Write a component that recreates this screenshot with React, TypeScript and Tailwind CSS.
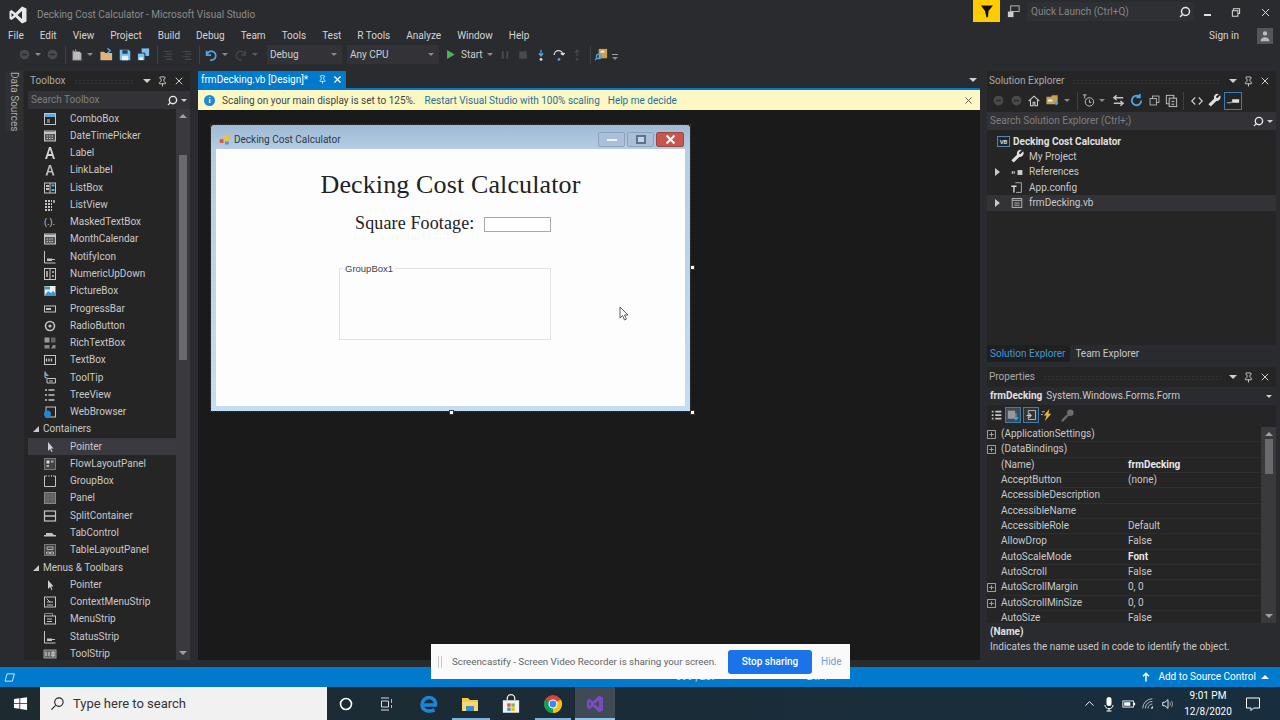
import React from "react";
import { ChevronUp, Pin, Search, X } from "lucide-react";

const toolboxA = [
  ["ComboBox", "combo"],
  ["DateTimePicker", "cal"],
  ["Label", "a"],
  ["LinkLabel", "a2"],
  ["ListBox", "list"],
  ["ListView", "dots"],
  ["MaskedTextBox", "mask"],
  ["MonthCalendar", "cal"],
  ["NotifyIcon", "strip"],
  ["NumericUpDown", "num"],
  ["PictureBox", "pic"],
  ["ProgressBar", "prog"],
  ["RadioButton", "radio"],
  ["RichTextBox", "rich"],
  ["TextBox", "text"],
  ["ToolTip", "tip"],
  ["TreeView", "tree"],
  ["WebBrowser", "web"],
];
const toolboxB = [
  ["Pointer", "ptr"],
  ["FlowLayoutPanel", "flow"],
  ["GroupBox", "group"],
  ["Panel", "panel"],
  ["SplitContainer", "split"],
  ["TabControl", "tab"],
  ["TableLayoutPanel", "table"],
];
const toolboxC = [
  ["Pointer", "ptr"],
  ["ContextMenuStrip", "ctx"],
  ["MenuStrip", "menu"],
  ["StatusStrip", "strip"],
  ["ToolStrip", "tool"],
];

const props: [string, string, boolean?, boolean?][] = [
  ["(ApplicationSettings)", "", false, true],
  ["(DataBindings)", "", false, true],
  ["(Name)", "frmDecking", true],
  ["AcceptButton", "(none)"],
  ["AccessibleDescription", ""],
  ["AccessibleName", ""],
  ["AccessibleRole", "Default"],
  ["AllowDrop", "False"],
  ["AutoScaleMode", "Font", true],
  ["AutoScroll", "False"],
  ["AutoScrollMargin", "0, 0", false, true],
  ["AutoScrollMinSize", "0, 0", false, true],
  ["AutoSize", "False"],
];

const menus = ["File", "Edit", "View", "Project", "Build", "Debug", "Team", "Tools", "Test", "R Tools", "Analyze", "Window", "Help"];

const Svg = ({ children, size = 16, vb = 16, className = "" }: { children: React.ReactNode; size?: number; vb?: number; className?: string }) => (
  <svg width={size} height={size} viewBox={`0 0 ${vb} ${vb}`} className={`shrink-0 ${className}`} fill="none">
    {children}
  </svg>
);

const ToolIcon = ({ kind }: { kind: string }) => {
  const c = "#c4c4c4";
  switch (kind) {
    case "combo":
      return <Svg><rect x="2.5" y="2.5" width="11" height="11" stroke={c} /><rect x="3" y="3" width="10" height="3" fill="#5ea9d6" /><path d="M5 9h3M5 11h3" stroke={c} /></Svg>;
    case "cal":
      return <Svg><rect x="2.5" y="3" width="11" height="10" fill="#555" stroke={c} /><path d="M3 5h10" stroke={c} strokeWidth="2" /><path d="M4.5 8h7M4.5 10.500h7" stroke={c} strokeDasharray="1.500 1" /></Svg>;
    case "a":
      return <Svg><path d="M3 14 7 2h2l4 12h-2l-1-3H6l-1 3Zm3.600-5h2.800L8 4.500Z" fill="#d4d4d4" /></Svg>;
    case "a2":
      return <Svg><path d="M3.500 13.500 7 3h2l3.500 10.500h-2l-.8-3H6.300l-.8 3Zm3.200-4.600h2.600L8 5Z" fill="#bdbdbd" /></Svg>;
    case "list":
      return <Svg><rect x="2.500" y="3" width="11" height="10" stroke={c} /><path d="M8 3v10" stroke={c} /><path d="M4 6h3M4 9h3" stroke={c} strokeWidth="2" /><path d="M9.500 5.500h3M9.500 10h3" stroke="#5ea9d6" strokeWidth="2" /></Svg>;
    case "dots":
      return <Svg><path d="M3 4h7M3 7h7M3 10h7M3 13h7" stroke={c} strokeWidth="2" strokeDasharray="2 1" /><path d="M12 3v3" stroke={c} strokeWidth="1.500" /></Svg>;
    case "mask":
      return <Svg><text x="2" y="11" fontSize="9" fill={c} fontFamily="Liberation Sans, sans-serif">(.).</text></Svg>;
    case "strip":
      return <Svg><path d="M2.500 2v12h11" stroke={c} /><rect x="5" y="9.500" width="5" height="2.500" fill={c} /><path d="M10 10.500h3" stroke={c} /></Svg>;
    case "num":
      return <Svg><rect x="2.500" y="2.500" width="11" height="11" stroke={c} /><path d="M8 3v10" stroke={c} /><path d="M5 5v6M10 6h2M10 10h2" stroke={c} strokeWidth="1.500" /></Svg>;
    case "pic":
      return <Svg><rect x="2.500" y="3" width="11" height="10" fill="#eee" /><path d="m3 12 3-4 3 2 2-2 2 2v3H3Z" fill="#2f9ad8" /><rect x="3" y="3.500" width="5" height="3" fill="#2f9ad8" /></Svg>;
    case "prog":
      return <Svg><rect x="2.500" y="5" width="11" height="6" stroke={c} /><rect x="4" y="7" width="5" height="2" fill={c} /></Svg>;
    case "radio":
      return <Svg><circle cx="8" cy="8" r="4.500" stroke={c} strokeWidth="1.600" /><circle cx="8" cy="8" r="1.600" fill={c} /></Svg>;
    case "rich":
      return <Svg><rect x="2.500" y="2.500" width="5" height="5" fill="#999" /><rect x="9" y="2.500" width="4.500" height="5" fill="#666" /><path d="M2.500 10h5v3.500h-5ZM9 13.500 11 10h2.500v3.500Z" fill="#888" /></Svg>;
    case "text":
      return <Svg><rect x="2.500" y="3.500" width="11" height="9" stroke={c} /><path d="M4.500 6.500v3M7 6.500v3M9.500 6.500v3" stroke={c} strokeWidth="1.400" /></Svg>;
    case "tip":
      return <Svg><path d="M3 1.500v6l3 1h7.500v4.500H5V9" stroke={c} /><path d="M3 1.500 7 6H3Z" fill="#5ea9d6" /><path d="M7 11h4" stroke={c} /></Svg>;
    case "tree":
      return <Svg><path d="M3 3h2M6.500 3h6M3 8h2M6.500 8h6M3 13h2M6.500 13h6" stroke={c} strokeWidth="1.500" /></Svg>;
    case "web":
      return <Svg><rect x="4" y="3" width="9.500" height="10" stroke={c} /><circle cx="5.500" cy="10" r="3.500" fill="#1f8ad0" /></Svg>;
    case "ptr":
      return <Svg><path d="M6 3v9l2-2 1.500 3 1-.6L9 9.500h2.500Z" fill="#d0d0d0" /></Svg>;
    case "flow":
      return <Svg><rect x="2.500" y="2.500" width="11" height="11" fill="#444" stroke="#777" /><path d="M4.500 4.500h3v3h-3Z" fill="#ddd" /><path d="M9 4.500h2.500v2H9ZM4.500 9h2.500v2H4.500Z" fill="#aaa" /></Svg>;
    case "group":
      return <Svg><path d="M5 3H2.500v10.500h11V3H11" stroke={c} /><path d="M6.500 3h1M9 3h1" stroke={c} strokeWidth="1.500" /></Svg>;
    case "panel":
      return <Svg><rect x="2.500" y="2.500" width="11" height="11" fill="#5d5d5d" stroke="#888" /><path d="M2.500 6h11M2.500 9h11M6 2.500v11M10 2.500v11" stroke="#777" strokeWidth=".6" /></Svg>;
    case "split":
      return <Svg><rect x="2.500" y="3" width="11" height="10" stroke={c} strokeWidth="1.200" /><path d="M2.500 8h11" stroke={c} strokeWidth="1.500" /></Svg>;
    case "tab":
      return <Svg><path d="M2 10h2V8h6l2 2h2v1.500H2Z" fill={c} /></Svg>;
    case "table":
      return <Svg><rect x="2.500" y="2.500" width="11" height="11" fill="#444" stroke="#777" /><path d="M5 5h6v2.500H5ZM4.500 10h3v2h-3ZM8.500 10h3v2h-3Z" stroke={c} strokeWidth=".8" /></Svg>;
    case "ctx":
      return <Svg><rect x="2.500" y="3" width="11" height="10" stroke={c} /><path d="M4.500 4.500 8 8M5 8h6M5 11h6" stroke={c} /></Svg>;
    case "menu":
      return <Svg><path d="M2.500 5V2.500h8V5" stroke="#888" /><rect x="2.500" y="5" width="11" height="8" stroke={c} /><path d="M5 8h5M5 10.500h5" stroke={c} /></Svg>;
    default:
      return <Svg><rect x="2" y="4" width="12" height="8" fill="#666" stroke="#999" /><path d="M4 6v4M7 6v4M10 6h2v4h-2Z" stroke="#ddd" /></Svg>;
  }
};

const ToolRow = ({ label, kind, active }: { label: string; kind: string; active?: boolean }) => (
  <div className={`flex h-[17.27px] items-center ${active ? "bg-[#3a3a40]" : ""}`}>
    <div className="ml-[8px] flex w-[28px] shrink-0 justify-center">
      <ToolIcon kind={kind} />
    </div>
    <span className="ml-[6px]">{label}</span>
  </div>
);

const Group = ({ label }: { label: string }) => (
  <div className="flex h-[17.27px] items-center">
    <span className="ml-[5px] h-0 w-0 border-b-[6px] border-l-[6px] border-b-[#c8c8c8] border-l-transparent" />
    <span className="ml-[4px]">{label}</span>
  </div>
);

const PanelHead = ({ title }: { title: string }) => (
  <div className="flex h-[20px] shrink-0 items-center text-[#a9a9a9]">
    <span className="ml-[2px]">{title}</span>
    <div className="ml-2 h-[5px] flex-1 bg-[radial-gradient(#343438_1px,transparent_1px)] bg-[length:4px_3px]" />
    <span className="ml-2 h-0 w-0 border-x-[4px] border-t-[4px] border-x-transparent border-t-[#d0d0d0]" />
    <Pin size={11} strokeWidth={2} className="ml-[6px] text-[#d0d0d0]" />
    <X size={12} strokeWidth={2} className="mx-[5px] text-[#d0d0d0]" />
  </div>
);

const Caret = ({ className = "" }: { className?: string }) => (
  <span className={`inline-block h-0 w-0 shrink-0 border-x-[3px] border-t-[3px] border-x-transparent border-t-[#8a8a8a] ${className}`} />
);

const Circle = () => (
  <Svg size={13}>
    <circle cx="8" cy="8" r="6" fill="#4a4a4d" />
    <path d="M5 8h6" stroke="#2a2b2e" strokeWidth="2" />
  </Svg>
);

const MainToolbar = () => (
  <div className="flex h-[21px] shrink-0 items-center">
    <div className="ml-[18px] flex w-[13px] justify-center"><Circle /></div>
    <Caret className="ml-[4px]" />
    <div className="ml-[5px] flex w-[13px] justify-center"><Circle /></div>
    <div className="ml-[6px] h-[18px] w-px bg-[#3f3f46]" />
    <Svg size={14} className="ml-[4px]"><path d="M3 4h8l2 2v8H3Z" fill="#bbb" stroke="#666" /><path d="M6 1.500 7 4l-1 2M3 3l2 1" stroke="#e2b64d" /></Svg>
    <Caret className="ml-[3px]" />
    <Svg size={15} className="ml-[6px]"><path d="M1.500 5h4l1 1.500h7.500V14H1.500Z" fill="#dcb67a" /><path d="M9 1.500 12 4l-3 2.500" stroke="#4fa3e0" strokeWidth="1.500" /></Svg>
    <Svg size={14} className="ml-[4px]"><path d="M2 2h10l2 2v10H2Z" fill="#7cc0f0" /><rect x="5" y="2.500" width="6" height="4" fill="#24425c" /><rect x="4.500" y="9" width="7" height="5" fill="#e4f1fb" /></Svg>
    <Svg size={15} className="ml-[4px]"><path d="M6 1.500h8v8H6Z" fill="#7cc0f0" /><path d="M1.500 6.500h8v8h-8Z" fill="#7cc0f0" stroke="#2a2b2e" /><rect x="3.500" y="11" width="4" height="3" fill="#e4f1fb" /></Svg>
    <div className="ml-[6px] h-[18px] w-px bg-[#3f3f46]" />
    <Svg size={14} className="ml-[3px]"><path d="M3 4h9M6 7h7M3 10h9M6 13h7" stroke="#47474a" strokeWidth="1.300" /></Svg>
    <Svg size={14} className="ml-[5px]"><path d="M3 4h9M6 7h7M3 10h9M6 13h7" stroke="#47474a" strokeWidth="1.300" /></Svg>
    <div className="ml-[5px] h-[18px] w-px bg-[#3f3f46]" />
    <Svg size={14} className="ml-[4px]"><path d="M3 3v5h5M3.500 8A5 5 0 1 1 7 13.500" stroke="#4fa3e0" strokeWidth="2" /></Svg>
    <Caret className="ml-[4px]" />
    <Svg size={14} className="ml-[6px]"><path d="M13 3v5H8M12.500 8A5 5 0 1 0 9 13.500" stroke="#47474a" strokeWidth="1.500" /></Svg>
    <Caret className="ml-[4px] opacity-50" />
    <div className="ml-[9px] flex h-[19px] w-[75px] items-center justify-between bg-[#333337] pl-[3px] pr-[5px] text-[#d0d0d0]">
      Debug<Caret />
    </div>
    <div className="ml-[5px] flex h-[19px] w-[92px] items-center justify-between bg-[#333337] pl-[3px] pr-[5px] text-[#d0d0d0]">
      Any CPU<Caret />
    </div>
    <Svg size={11} className="ml-[6px]"><path d="M3 1.500 14 8 3 14.500Z" fill="#4fb35a" /></Svg>
    <span className="ml-[5px] text-[#d0d0d0]">Start</span>
    <Caret className="ml-[4px]" />
    <Svg size={12} className="ml-[6px]"><path d="M5 3v10M11 3v10" stroke="#4a4a4d" strokeWidth="2.500" /></Svg>
    <Svg size={12} className="ml-[6px]"><rect x="3" y="3" width="10" height="10" fill="#4a4a4d" /></Svg>
    <Svg size={14} className="ml-[5px]"><path d="M8 2v6M5.500 6 8 9l2.500-3" stroke="#4fa3e0" strokeWidth="1.500" /><circle cx="8" cy="13" r="1.600" fill="#ddd" /></Svg>
    <Svg size={14} className="ml-[4px]"><path d="M2.500 8a5 5 0 0 1 10 0M12.500 8l-2.500-2M12.500 8l1.800-2.500" stroke="#ddd" strokeWidth="1.500" /><circle cx="8" cy="13" r="1.600" fill="#4fa3e0" /></Svg>
    <Svg size={14} className="ml-[4px]"><path d="M8 9V3M5.500 5 8 2.500 10.500 5" stroke="#47474a" strokeWidth="1.500" /><circle cx="8" cy="13" r="1.600" fill="#47474a" /></Svg>
    <div className="ml-[6px] h-[18px] w-px bg-[#3f3f46]" />
    <Svg size={15} className="ml-[3px]"><path d="M5 2h9v10H5Z" fill="#c9a050" /><rect x="7" y="4" width="4" height="2" fill="#eee" /><circle cx="5" cy="10" r="2.500" stroke="#4fa3e0" strokeWidth="1.300" /><path d="m3 12-2 2" stroke="#4fa3e0" strokeWidth="1.300" /></Svg>
    <div className="ml-[3px] mt-[4px] flex flex-col items-center gap-[2px]">
      <span className="h-px w-[6px] bg-[#a0a0a0]" />
      <Caret />
    </div>
  </div>
);

const Wrench = ({ className = "" }: { className?: string }) => (
  <Svg size={15} className={className}><path d="M14 2.500 11 5.500l-1-.5-.5-1 3-3a4 4 0 0 0-5 5L1.500 12l2.500 2.500L10 8.500a4 4 0 0 0 4-6Z" fill="#e0e0e0" /></Svg>
);

const SolutionToolbar = () => (
  <div className="flex h-[19px] shrink-0 items-center">
    <div className="ml-[5px] flex w-[13px] justify-center"><Circle /></div>
    <div className="ml-[5px] flex w-[13px] justify-center"><Circle /></div>
    <Svg size={14} className="ml-[4px]"><path d="M2 8 8 2.500 14 8M4 7v6.500h3v-4h2v4h3V7" stroke="#d0d0d0" strokeWidth="1.200" /></Svg>
    <Svg size={15} className="ml-[4px]"><path d="M1.500 4h5l1-1.500h6V12h-12Z" fill="#c9a050" /><rect x="3" y="7" width="5" height="2" fill="#eee" /><path d="M10 11h4M12 9v4" stroke="#4fa3e0" strokeWidth="1.500" /></Svg>
    <Caret className="ml-[4px]" />
    <div className="ml-[7px] h-[18px] w-px bg-[#3f3f46]" />
    <Svg size={15} className="ml-[3px]"><circle cx="9" cy="9.500" r="4.500" stroke="#c4c4c4" /><path d="M9 7v3h2M2 2h4M4 2v4" stroke="#c4c4c4" /></Svg>
    <Caret className="ml-[3px]" />
    <Svg size={15} className="ml-[6px]"><path d="M4 5h9M6 2.500 3 5l3 2.500M12 11H3M10 8.500l3 2.500-3 2.500" stroke="#c4c4c4" strokeWidth="1.500" /></Svg>
    <Svg size={15} className="ml-[3px]"><path d="M13 8a5 5 0 1 1-2-4M11.500 1v3.500H8" stroke="#4fa3e0" strokeWidth="2" /></Svg>
    <Svg size={13} className="ml-[4px]"><rect x="5.500" y="2.500" width="8" height="8" stroke="#c4c4c4" /><rect x="2.500" y="5.500" width="8" height="8" fill="#2a2b2e" stroke="#c4c4c4" /></Svg>
    <Svg size={15} className="ml-[3px]"><rect x="2.500" y="2.500" width="8" height="9" stroke="#c4c4c4" /><rect x="5.500" y="5.500" width="8" height="9" fill="#2a2b2e" stroke="#c4c4c4" /><path d="M8 9h3M8 12h3" stroke="#c4c4c4" /></Svg>
    <div className="ml-[4px] h-[18px] w-px bg-[#3f3f46]" />
    <Svg size={14} className="ml-[6px]"><path d="M6 4 2 8l4 4M10 4l4 4-4 4" stroke="#d0d0d0" strokeWidth="1.300" /></Svg>
    <Wrench className="ml-[3px]" />
    <div className="ml-[2px] flex h-[18px] w-[18px] items-center justify-center border border-[#3a7db0]">
      <Svg size={14}><path d="M1 10h5V8.500" stroke="#c4c4c4" /><rect x="7" y="6" width="8" height="4" fill="#e0e0e0" /></Svg>
    </div>
  </div>
);

const SearchBox = ({ placeholder, className = "" }: { placeholder: string; className?: string }) => (
  <div className={`flex h-[18px] shrink-0 items-center bg-[#333337] text-[#7f7f7f] ${className}`}>
    <span className="ml-[3px] flex-1 truncate">{placeholder}</span>
    <Search size={11} strokeWidth={3} className="-scale-x-100 text-[#e8e8e8]" />
    <span className="mx-[3px] h-0 w-0 border-x-[3px] border-t-[3px] border-x-transparent border-t-[#d0d0d0]" />
  </div>
);

const TreeRow = ({ label, arrow, bold, selected, icon }: { label: string; arrow?: boolean; bold?: boolean; selected?: boolean; icon: React.ReactNode }) => (
  <div className={`flex h-[15.33px] items-center ${selected ? "bg-[#333337]" : ""}`}>
    {bold ? (
      <>
        <div className="ml-[10px] flex w-[13px] justify-center">{icon}</div>
        <span className="ml-[3px] font-bold text-[#e0e0e0]">{label}</span>
      </>
    ) : (
      <>
        <div className="ml-[6px] flex w-[8px] justify-center">
          {arrow && <span className="h-0 w-0 border-y-[4px] border-l-[5px] border-y-transparent border-l-[#c8c8c8]" />}
        </div>
        <div className="ml-[9px] flex w-[14px] justify-center">{icon}</div>
        <span className="ml-[5px]">{label}</span>
      </>
    )}
  </div>
);

const FormWindow = () => (
  <div className="relative ml-[13px] mt-[15px] w-[479px] outline-1 outline-dotted outline-[#3a3a3a]">
    <div className="flex h-[24px] items-center rounded-t-[3px] bg-gradient-to-b from-[#9fbad5] to-[#b5cde3] pl-[8px] pt-[5px] text-[#2c3a48]">
      <Svg size={12}>
        <rect x="1" y="7" width="5" height="5" fill="#d9523f" />
        <rect x="7" y="2" width="7" height="7" fill="#f1c232" />
        <rect x="8" y="10" width="5" height="4" fill="#5a8fd0" />
      </Svg>
      <span className="ml-[3px]">Decking Cost Calculator</span>
      <div className="ml-auto mr-[6px] flex gap-[2px]">
        <div className="flex h-[15px] w-[27px] items-center justify-center rounded-[2px] border border-[#8ba3bb] bg-[#a9c0d8]"><span className="h-[2px] w-[10px] bg-[#eef3f8]" /></div>
        <div className="flex h-[15px] w-[27px] items-center justify-center rounded-[2px] border border-[#8ba3bb] bg-[#a9c0d8]"><span className="h-[9px] w-[10px] border-2 border-[#5d7388] bg-[#c3d4e5]" /></div>
        <div className="flex h-[15px] w-[28px] items-center justify-center rounded-[2px] border border-[#9a4a44] bg-[#c9564c]"><X size={13} strokeWidth={4} className="text-white" /></div>
      </div>
    </div>
    <div className="bg-gradient-to-b from-[#b5cde3] to-[#c4ddf2] px-[5px] pb-[5px]">
      <div className="h-[257px] bg-[#fdfdfe] pt-[19px] font-['Liberation_Serif',serif] text-[#222]">
        <div className="text-center text-[26px] leading-[34px] tracking-[0.13px]">Decking Cost Calculator</div>
        <div className="mt-[6px] flex h-[30px] items-center pl-[139px]">
          <span className="text-[18px] tracking-[0.13px]">Square Footage:</span>
          <div className="ml-[10px] mt-[2px] h-[15px] w-[67px] border border-[#a8a8a8] bg-white" />
        </div>
        <div className="relative ml-[123px] mt-[30px] h-[72px] w-[212px] border border-[#e2e2e2] font-['Liberation_Sans',sans-serif]">
          <span className="absolute -top-[6px] left-[3px] bg-[#fdfdfe] px-[2px] text-[9.500px] leading-[12px] text-[#444]">GroupBox1</span>
        </div>
      </div>
    </div>
    <svg width="10" height="15" viewBox="0 0 10 15" className="absolute left-[408px] top-[181px]">
      <path d="M1 1v11l2.500-2.500L5.500 14l2-1-2-4H9Z" fill="#fff" stroke="#333" strokeWidth=".8" />
    </svg>
    <span className="absolute -right-[5px] top-[140px] h-[5px] w-[5px] border border-[#333] bg-white" />
    <span className="absolute -right-[5px] -bottom-[4px] h-[5px] w-[5px] border border-[#333] bg-white" />
    <span className="absolute left-[238px] -bottom-[4px] h-[5px] w-[5px] border border-[#333] bg-white" />
  </div>
);

const Tray = () => (
  <div className="ml-auto flex items-center text-white">
    <ChevronUp size={15} strokeWidth={1.5} />
    <Svg size={16} className="ml-[4px]"><rect x="5.500" y="1" width="5" height="9" rx="2.500" fill="#fff" /><path d="M4 9c0 5 8 5 8 0M8 12v3M5.500 15h5" stroke="#fff" /></Svg>
    <Svg size={14} className="ml-[5px]"><rect x="1" y="4.500" width="12" height="7" stroke="#fff" /><rect x="2.500" y="6" width="7" height="4" fill="#fff" /><rect x="13.500" y="6.500" width="1.500" height="3" fill="#fff" /></Svg>
    <Svg size={14} className="ml-[5px]"><path d="M2 13A11 11 0 0 1 13 2M5 13a8 8 0 0 1 8-8M8 13a5 5 0 0 1 5-5" stroke="#ccc" /><path d="m11 13 2.500-3V13Z" fill="#fff" /></Svg>
    <Svg size={14} className="ml-[6px]"><path d="M2 6h2.500L8 3v10l-3.500-3H2Z" stroke="#fff" /><path d="M10 6a3 3 0 0 1 0 4M12 4.500a5.500 5.500 0 0 1 0 7" stroke="#aaa" /></Svg>
    <div className="ml-[5px] w-[56px] text-center text-[10px] leading-[16px]">
      <div>9:01 PM</div>
      <div>12/8/2020</div>
    </div>
    <Svg size={16} className="ml-[9px] mr-[19px]"><path d="M1.500 2h13v10H8.500L6 14.500V12H1.500Z" stroke="#fff" /></Svg>
  </div>
);

const Taskbar = () => (
  <div className="relative flex h-[33px] shrink-0 items-center bg-gradient-to-r from-[#1d2a30] to-[#182e3f]">
    <Svg size={15} className="ml-[13px]"><path d="M1 3.200 6.800 2.400v5.300H1ZM7.700 2.300 15 1.300v6.400H7.700ZM1 8.500h5.800v5.200L1 12.900ZM7.700 8.500H15v6.300l-7.300-1Z" fill="#fff" /></Svg>
    <div className="ml-[12px] flex h-[33px] w-[287px] shrink-0 items-center bg-[#f1f1f1] text-[13px] text-[#333]">
      <Svg size={15} className="ml-[10px]"><circle cx="9.500" cy="6.500" r="4.500" stroke="#222" strokeWidth="1.200" /><path d="M6 10 1.500 14.500" stroke="#222" strokeWidth="1.200" /></Svg>
      <span className="ml-[8px]">Type here to search</span>
    </div>
    <Svg size={16} className="ml-[11px]"><circle cx="8" cy="8" r="5.500" stroke="#fff" strokeWidth="1.600" /></Svg>
    <Svg size={16} className="ml-[24px]"><path d="M3 2h8M3.500 5h7v6h-7ZM3 14h8" stroke="#ddd" /><path d="M13.500 3v4M13.500 9v3" stroke="#bbb" /></Svg>
    <Svg size={20} vb={20} className="ml-[25px]"><path d="M3 11h13.500A6.500 6.500 0 0 0 10 3.500C6 3.500 3 7 3 11c0 5 6 7.500 12.500 5" stroke="#1b86d8" strokeWidth="3.500" /></Svg>
    <Svg size={20} vb={20} className="ml-[21px]"><path d="M2 4h6l2 2h8v11H2Z" fill="#f3c84b" /><path d="M2 8h16v9H2Z" fill="#f7d774" /><rect x="6" y="12" width="8" height="5" fill="#3a8fc4" /></Svg>
    <Svg size={20} className="ml-[21px]"><path d="M5 5V3.500a3 3 0 0 1 6 0V5" stroke="#eee" /><path d="M1.500 5h13v10h-13Z" fill="#f1f1f1" /><rect x="5" y="7.500" width="2.700" height="2.700" fill="#e8542e" /><rect x="8.300" y="7.500" width="2.700" height="2.700" fill="#7fb93f" /><rect x="5" y="10.800" width="2.700" height="2.700" fill="#2d9fe0" /><rect x="8.300" y="10.800" width="2.700" height="2.700" fill="#f4b400" /></Svg>
    <svg width="20" height="20" viewBox="0 0 20 20" className="ml-[22px]">
      <circle cx="10" cy="10" r="9" fill="#db4437" />
      <path d="M10 10 17.800 5.500A9 9 0 0 1 10 19Z" fill="#f4c20d" />
      <path d="M10 10 10 19A9 9 0 0 1 2.200 5.500Z" fill="#0f9d58" />
      <circle cx="10" cy="10" r="4.500" fill="#fff" />
      <circle cx="10" cy="10" r="3.400" fill="#4285f4" />
    </svg>
    <div className="relative ml-[12px] flex h-[33px] w-[40px] items-center justify-center bg-[#3f4a54]">
      <Svg size={20} vb={20}><path d="M14 1.500 8 7.500 4.500 4.500 2 6v8l2.500 1.500L8 12.500l6 6 4-2V3.500ZM14 6.500v7L9.500 10ZM4 8l2.500 2L4 12Z" fill="#7a4bc0" fillRule="evenodd" /></Svg>
      <span className="absolute bottom-0 left-0 h-[2px] w-full bg-[#8fc4ec]" />
    </div>
    <span className="absolute bottom-0 left-[452px] h-[2px] w-[38px] bg-[#7fb4dc]" />
    <span className="absolute bottom-0 left-[535px] h-[2px] w-[36px] bg-[#7fb4dc]" />
    <Tray />
  </div>
);

const App = () => {
  return (
    <div className="relative flex h-[720px] w-[1280px] flex-col overflow-hidden bg-[#2a2b2e] font-['Roboto',sans-serif] text-[10px] leading-[14px] text-[#c8c8c8]">
      {/* title bar */}
      <div className="flex h-[27px] shrink-0 items-start">
        <Svg size={20} vb={20} className="ml-[8px] mt-[5px]"><path d="M14 1.500 7.500 8 3.500 5 1.500 6.200v7.600L3.500 15l4-3 6.500 6.500 4.500-2V3.500ZM14 6v8L9.500 10ZM3.500 8l2.500 2-2.500 2Z" fill="#e8e8e8" fillRule="evenodd" /></Svg>
        <span className="ml-[9px] mt-[8px] text-[#8c8c8c]">Decking Cost Calculator - Microsoft Visual Studio</span>
        <div className="ml-auto flex h-[22px] w-[27px] items-center justify-center bg-[#ffcc00]">
          <Svg size={16}><path d="M2 2.500h12L9.500 8 9 14 7.500 14.500 6 8Z" fill="#111" /></Svg>
        </div>
        <Svg size={15} className="ml-[6px] mt-[4px]"><rect x="5" y="2" width="9" height="6" stroke="#bbb" /><rect x="2" y="8" width="6" height="6" fill="#ccc" /></Svg>
        <div className="ml-[6px] mt-[2px] flex h-[19px] w-[167px] items-center justify-between bg-[#2f3033] pl-[4px] pr-[3px] text-[#858585]">
          Quick Launch (Ctrl+Q)
          <Search size={12} strokeWidth={3} className="-scale-x-100 text-[#e8e8e8]" />
        </div>
        <span className="ml-[10px] mt-[14px] h-[2px] w-[7px] bg-[#e0e0e0]" />
        <Svg size={11} className="ml-[20px] mt-[7px]"><path d="M3.500 5V2.500h9v7H10M2 5.500h8v8H2Z" stroke="#d8d8d8" strokeWidth="1.500" /></Svg>
        <X size={13} strokeWidth={1.800} className="ml-[17px] mt-[6px] mr-[8px] text-[#e0e0e0]" />
      </div>

      {/* menu bar */}
      <div className="flex h-[17px] shrink-0 items-center">
        <div className="ml-[8px] flex gap-[16px] text-[#d4d4d4]">
          {menus.map((m) => (
            <span key={m}>{m}</span>
          ))}
        </div>
        <span className="ml-auto text-[#d4d4d4]">Sign in</span>
        <div className="ml-[18px] mr-[7px] flex h-[16px] w-[16px] items-center justify-center bg-[#55565a]">
          <Svg size={14}><circle cx="8" cy="5" r="2.500" fill="#bbb" /><path d="M3 14c0-6 10-6 10 0Z" fill="#bbb" /></Svg>
        </div>
      </div>

      <MainToolbar />

      {/* main area */}
      <div className="flex min-h-0 flex-1 pt-[6px]">
        {/* rail */}
        <div className="w-[24px] shrink-0">
          <div className="ml-[5px] flex h-[60px] w-[18px] items-start justify-center bg-[#2f3033]">
            <span className="mt-[1px] whitespace-nowrap text-[#a9a9a9] [writing-mode:vertical-rl]">Data Sources</span>
          </div>
        </div>

        {/* toolbox */}
        <div className="mb-[7px] flex w-[166px] shrink-0 flex-col bg-[#252526] pl-[4px]">
          <PanelHead title="Toolbox" />
          <SearchBox placeholder="Search Toolbox" />
          <div className="flex min-h-0 flex-1">
            <div className="min-w-0 flex-1 overflow-hidden pt-[1px] text-[#c8c8c8]">
              {toolboxA.map(([l, k]) => <ToolRow key={l} label={l} kind={k} />)}
              <Group label="Containers" />
              {toolboxB.map(([l, k]) => <ToolRow key={l} label={l} kind={k} active={l === "Pointer"} />)}
              <Group label="Menus & Toolbars" />
              {toolboxC.map(([l, k]) => <ToolRow key={l} label={l} kind={k} />)}
            </div>
            <div className="flex w-[14px] shrink-0 flex-col items-center bg-[#3a3a3d] pt-[5px]">
              <span className="h-0 w-0 border-x-[4px] border-b-[4px] border-x-transparent border-b-[#a0a0a0]" />
              <div className="mt-[37px] h-[205px] w-[8px] bg-[#6a6a6a]" />
              <span className="mt-auto mb-[5px] h-0 w-0 border-x-[4px] border-t-[4px] border-x-transparent border-t-[#a0a0a0]" />
            </div>
          </div>
        </div>

        {/* document */}
        <div className="mb-[7px] ml-[8px] flex w-[782px] shrink-0 flex-col">
          <div className="flex h-[17px] shrink-0 items-center justify-between">
            <div className="flex h-[17px] w-[148px] items-center whitespace-nowrap bg-[#007acc] pl-[3px] text-white">
              frmDecking.vb [Design]*
              <Pin size={9} className="ml-auto" />
              <X size={11} strokeWidth={2.500} className="ml-[5px] mr-[3px]" />
            </div>
            <span className="mr-[3px] h-0 w-0 border-x-[4px] border-t-[4px] border-x-transparent border-t-[#d0d0d0]" />
          </div>
          <div className="h-[2px] shrink-0 bg-[#007acc]" />
          <div className="flex h-[20px] shrink-0 items-center bg-[#fbf8c4] pt-[1px] text-[#444]">
            <div className="ml-[6px] flex h-[11px] w-[11px] items-center justify-center rounded-full bg-[#1c8ad4] text-[8px] font-bold leading-none text-white">i</div>
            <span className="ml-[7px]">Scaling on your main display is set to 125%.</span>
            <span className="ml-[9px] text-[#1f7199]">Restart Visual Studio with 100% scaling</span>
            <span className="ml-[8px] text-[#1f7199]">Help me decide</span>
            <X size={11} className="ml-auto mr-[6px] text-[#555]" />
          </div>
          <div className="min-h-0 flex-1 bg-[#1a1a1a]">
            <FormWindow />
          </div>
        </div>

        {/* right column */}
        <div className="mb-[7px] ml-[7px] flex w-[289px] shrink-0 flex-col">
          <div className="flex h-[274px] shrink-0 flex-col bg-[#252526]">
            <PanelHead title="Solution Explorer" />
            <SolutionToolbar />
            <SearchBox placeholder="Search Solution Explorer (Ctrl+;)" className="mt-[2px]" />
            <div className="flex-1 pt-[4px] text-[#c8c8c8]">
              <TreeRow bold label="Decking Cost Calculator" icon={<span className="flex h-[11px] w-[13px] items-center justify-center border border-[#4f87b8] text-[6px] font-bold text-[#cfd8e0]">VB</span>} />
              <TreeRow label="My Project" icon={<Wrench />} />
              <TreeRow arrow label="References" icon={<Svg size={13}><path d="M1 8h4" stroke="#ccc" strokeWidth="3" strokeDasharray="2 1" /><rect x="8" y="5" width="6" height="6" fill="#ccc" /></Svg>} />
              <TreeRow label="App.config" icon={<Svg size={14}><path d="M6 2h7v11H7" stroke="#bbb" /><path d="M1.500 6h6M4.500 6v7" stroke="#ddd" strokeWidth="1.500" /></Svg>} />
              <TreeRow arrow selected label="frmDecking.vb" icon={<Svg size={14}><rect x="2.500" y="3" width="11" height="10" stroke="#c4c4c4" /><path d="M3 5h10" stroke="#c4c4c4" /><path d="M5 8h6M5 10.500h6" stroke="#c4c4c4" /></Svg>} />
            </div>
          </div>
          <div className="flex h-[17px] shrink-0 items-center">
            <div className="flex h-[17px] items-center bg-[#1f1f20] pl-[3px] pr-[5px] text-[#3f9ad6]">Solution Explorer</div>
            <span className="ml-[5px]">Team Explorer</span>
          </div>
          <div className="mt-[5px] flex min-h-0 flex-1 flex-col bg-[#252526]">
            <PanelHead title="Properties" />
            <div className="flex h-[18px] shrink-0 items-center bg-[#2a2b2e] pl-[3px]">
              <span className="font-bold text-[#e0e0e0]">frmDecking</span>
              <span className="ml-[4px]">System.Windows.Forms.Form</span>
              <span className="ml-auto mr-[4px] h-0 w-0 border-x-[3px] border-t-[3px] border-x-transparent border-t-[#d0d0d0]" />
            </div>
            <div className="flex h-[22px] shrink-0 items-center pb-[2px] pl-[3px]">
              <Svg size={14}><path d="M2 4h2M6 4h7M2 8h2M6 8h7M2 12h2M6 12h7" stroke="#c4c4c4" strokeWidth="2" /></Svg>
              <div className="ml-[1px] flex h-[16px] w-[16px] items-center justify-center border border-[#3a7db0] bg-[#3f4a54]">
                <Svg size={13}><rect x="1" y="2" width="9" height="10" fill="#999" /><path d="M11 5v7M8.500 10l2.500 3 2.500-3" stroke="#4fa3e0" strokeWidth="1.500" /></Svg>
              </div>
              <div className="ml-[2px] flex h-[16px] w-[16px] items-center justify-center border border-[#3a7db0] bg-[#333337]">
                <Svg size={13}><rect x="4" y="2" width="9" height="11" stroke="#ccc" /><path d="M2 8h5M5 5.500 7.500 8 5 10.500" stroke="#ccc" strokeWidth="1.300" /></Svg>
              </div>
              <Svg size={15} className="ml-[1px]"><path d="M10 1 4 8h3l-2 6 7-8H9Z" fill="#e2b64d" /><path d="M2 4h3M1 7h2" stroke="#c4c4c4" /></Svg>
              <Svg size={15} className="ml-[5px]"><circle cx="11" cy="5" r="3.500" fill="#6c6c6c" /><path d="M8.500 7.500 2 14" stroke="#6c6c6c" strokeWidth="2.500" /></Svg>
            </div>
            <div className="flex h-[196px] shrink-0 overflow-hidden">
              <div className="min-w-0 flex-1">
                {props.map(([name, value, bold, plus]) => (
                  <div key={name} className="flex h-[15.33px] shrink-0 items-center">
                    <div className="flex w-[14px] shrink-0 justify-end pr-[5px]">
                      {plus && (
                        <Svg size={9}><rect x="1" y="1" width="14" height="14" stroke="#aaa" strokeWidth="1.600" /><path d="M4 8h8M8 4v8" stroke="#aaa" strokeWidth="1.600" /></Svg>
                      )}
                    </div>
                    <div className="flex h-full min-w-0 flex-1 items-center border-b border-[#2d2d30]">
                      <span className="w-[127px] shrink-0">{name}</span>
                      {value && <span className={bold ? "font-bold text-[#e8e8e8]" : ""}>{value}</span>}
                    </div>
                  </div>
                ))}
              </div>
              <div className="flex w-[15px] shrink-0 flex-col items-center bg-[#3a3a3d] pt-[5px]">
                <span className="h-0 w-0 border-x-[4px] border-b-[4px] border-x-transparent border-b-[#a0a0a0]" />
                <div className="mt-[3px] h-[35px] w-[8px] bg-[#6a6a6a]" />
                <span className="mt-auto mb-[5px] h-0 w-0 border-x-[4px] border-t-[4px] border-x-transparent border-t-[#a0a0a0]" />
              </div>
            </div>
            <div className="flex-1 bg-[#2a2b2e] pl-[3px] pt-[2px] leading-[14px]">
              <div className="font-bold text-[#e0e0e0]">(Name)</div>
              <div className="mt-[1px]">Indicates the name used in code to identify the object.</div>
            </div>
          </div>
        </div>
      </div>

      {/* status bar */}
      <div className="flex h-[20px] shrink-0 items-center bg-[#007acc] text-white">
        <Svg size={13} className="ml-[3px]"><path d="M5 3.500h9L11.500 12.500h-9Z" stroke="#fff" /></Svg>
        <span className="ml-[660px] text-[#cde6f6]">399 , 287</span>
        <span className="ml-[90px] text-[#cde6f6]">2 x 1</span>
        <div className="ml-auto flex items-center">
          <Svg size={12}><path d="M8 14V3M4 7l4-4 4 4" stroke="#fff" strokeWidth="2" /></Svg>
          <span className="ml-[6px]">Add to Source Control</span>
          <span className="ml-[5px] mr-[11px] h-0 w-0 border-x-[4px] border-b-[4px] border-x-transparent border-b-white" />
        </div>
      </div>

      <Taskbar />

      {/* screencastify share notice */}
      <div className="absolute left-[431px] top-[644px] flex h-[35px] w-[419px] items-center whitespace-nowrap bg-[#fafafa] text-[#5f6368]">
        <span className="ml-[7px] h-[12px] w-[4px] border-x border-[#c8c8c8]" />
        <span className="ml-[10px] text-[9.750px]">Screencastify - Screen Video Recorder is sharing your screen.</span>
        <div className="absolute left-[297px] flex h-[24px] w-[84px] items-center justify-center rounded-[3px] bg-[#1a73e8] font-medium text-white">Stop sharing</div>
        <span className="absolute left-[390px] text-[#6c9fdc]">Hide</span>
      </div>
    </div>
  );
};

export default App;
